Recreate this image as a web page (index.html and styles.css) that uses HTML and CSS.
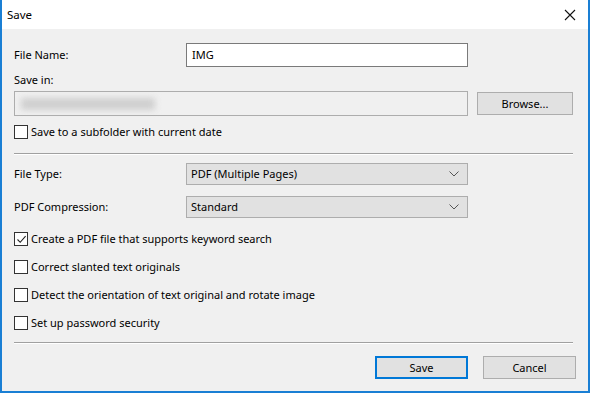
FILE: index.html
```html
<!DOCTYPE html>
<html lang="en">
<head>
  <meta charset="UTF-8">
  <title>Save</title>
  <link rel="stylesheet" href="styles.css">
</head>
<body>
  <div class="window">
    <div class="titlebar">
      <span class="title">Save</span>
      <svg class="close" width="12" height="12" viewBox="0 0 12 12"><path d="M1 1 L11 11 M11 1 L1 11" stroke="#111" stroke-width="1.1" fill="none"/></svg>
    </div>
    <div class="content">
      <div class="row first">
        <label class="label">File Name:</label>
        <div class="textbox">IMG</div>
      </div>
      <div class="caption">Save in:</div>
      <div class="row path-row">
        <div class="textbox path"><span class="blur"></span></div>
        <button class="button browse">Browse...</button>
      </div>
      <div class="check sub">
        <span class="box"></span>Save to a subfolder with current date
      </div>
      <div class="separator"></div>
      <div class="row type-row">
        <label class="label">File Type:</label>
        <div class="select">PDF (Multiple Pages)
          <svg class="arrow" width="10" height="6" viewBox="0 0 10 6"><path d="M0.5 0.5 L5 5 L9.5 0.5" stroke="#555" fill="none"/></svg>
        </div>
      </div>
      <div class="row comp-row">
        <label class="label">PDF Compression:</label>
        <div class="select">Standard
          <svg class="arrow" width="10" height="6" viewBox="0 0 10 6"><path d="M0.5 0.5 L5 5 L9.5 0.5" stroke="#555" fill="none"/></svg>
        </div>
      </div>
      <div class="options">
        <div class="check">
          <span class="box"><svg width="11" height="11" viewBox="0 0 11 11"><path d="M1.5 5.5 L4.2 8.3 L9.6 2.2" stroke="#222" stroke-width="1.1" fill="none"/></svg></span>Create a PDF file that supports keyword search
        </div>
        <div class="check"><span class="box"></span>Correct slanted text originals</div>
        <div class="check"><span class="box"></span>Detect the orientation of text original and rotate image</div>
        <div class="check"><span class="box"></span>Set up password security</div>
      </div>
      <div class="separator bottom"></div>
      <div class="actions">
        <button class="button default">Save</button>
        <button class="button">Cancel</button>
      </div>
    </div>
  </div>
</body>
</html>
```

FILE: styles.css
```css
body {
  margin: 0;
  font-family: 'Noto Sans', 'Open Sans', sans-serif;
  font-size: 11px;
  color: #000;
  background: #fff;
}
.window {
  width: 590px;
  height: 393px;
  box-sizing: border-box;
  border: 1px solid #1a7fd4;
  border-top: none;
  border-left-width: 2px;
  border-right-width: 2px;
  border-bottom-width: 2px;
  background: #f0f0f0;
  overflow: hidden;
}
.titlebar {
  height: 29px;
  background: #fff;
  display: flex;
  align-items: center;
  justify-content: space-between;
  padding: 0 12px 0 5px;
}
.title {
  font-size: 11.5px;
  line-height: 16px;
}
.close {
  display: block;
}
.content {
  padding: 0 12px 0 12px;
}
.row {
  display: flex;
  align-items: center;
}
.first {
  margin-top: 14px;
}
.label {
  width: 172px;
  line-height: 16px;
}
.textbox {
  box-sizing: border-box;
  width: 282px;
  height: 24px;
  background: #fff;
  border: 1px solid #7a7a7a;
  padding: 0 5px;
  line-height: 22px;
}
.caption {
  margin-top: 5px;
  line-height: 16px;
}
.path-row {
  margin-top: 3px;
}
.textbox.path {
  width: 454px;
  height: 25px;
  background: #f0f0f0;
  border-color: #adadad;
  display: flex;
  align-items: center;
}
.blur {
  width: 134px;
  height: 12px;
  margin-left: 1px;
  background: #cfcfcf;
  filter: blur(3px);
}
.button {
  box-sizing: border-box;
  height: 23px;
  background: #e1e1e1;
  border: 1px solid #adadad;
  font-family: inherit;
  font-size: 11px;
  color: #000;
  padding: 0;
  margin: 0;
}
.browse {
  width: 96px;
  margin-left: 9px;
}
.check {
  display: flex;
  align-items: center;
  line-height: 16px;
  height: 16px;
}
.box {
  box-sizing: border-box;
  width: 14px;
  height: 14px;
  border: 1px solid #333;
  background: #fff;
  margin-right: 3px;
  display: flex;
  align-items: center;
  justify-content: center;
}
.box svg {
  display: block;
}
.sub {
  margin-top: 8px;
}
.separator {
  margin-top: 13px;
  border-top: 1px solid #a0a0a0;
  border-bottom: 1px solid #fff;
  width: 559px;
}
.type-row {
  margin-top: 8px;
}
.comp-row {
  margin-top: 11px;
}
.select {
  box-sizing: border-box;
  width: 282px;
  height: 22px;
  background: #e1e1e1;
  border: 1px solid #adadad;
  padding: 0 4px;
  line-height: 20px;
  display: flex;
  align-items: center;
  justify-content: space-between;
}
.arrow {
  display: block;
  margin-right: 4px;
}
.options {
  margin-top: 13px;
  display: flex;
  flex-direction: column;
  gap: 12px;
}
.separator.bottom {
  margin-top: 11px;
}
.actions {
  display: flex;
  justify-content: flex-end;
  gap: 15px;
  margin-top: 12px;
}
.actions .button {
  width: 93px;
  height: 23px;
}
.button.default {
  border: 2px solid #0078d7;
}
```
